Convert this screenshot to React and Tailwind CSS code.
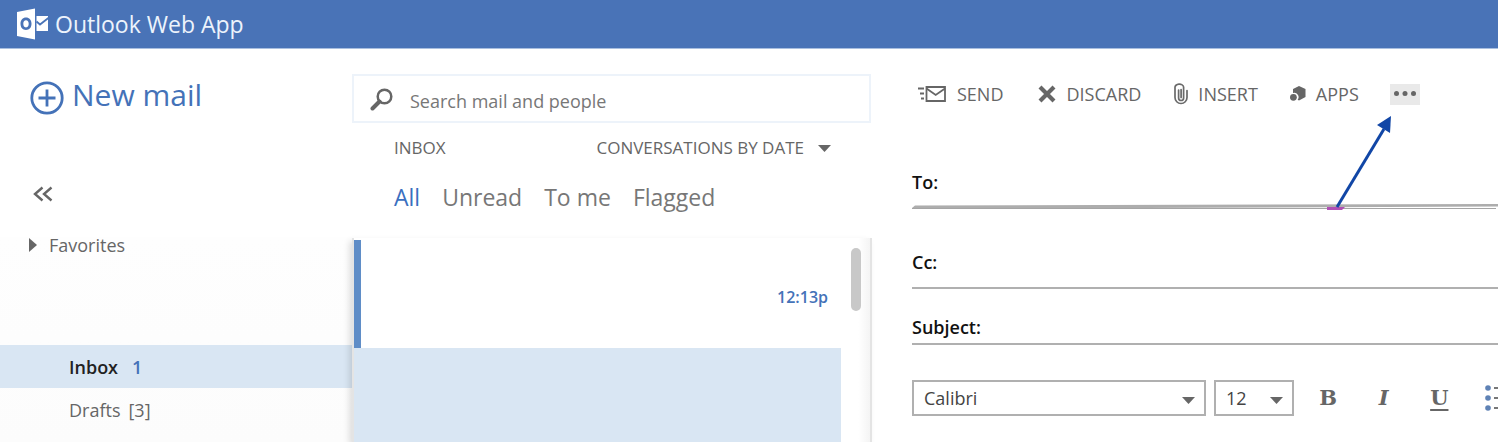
import React, { useState } from 'react';

const folders = [
  { name: 'Inbox', count: '1', selected: true },
  { name: 'Drafts', count: '[3]', selected: false },
];

const filters = ['All', 'Unread', 'To me', 'Flagged'];

const OutlookLogo = () => (
  <svg width="34" height="32" viewBox="0 0 34 32" aria-hidden="true">
    <path fill="#fff" fillRule="evenodd" d="M1 4 19 0.500V31.500L1 28ZM10 9.500C6.700 9.500 4.500 12 4.500 15.800S6.700 22 10 22S15.500 19.600 15.500 15.800S13.300 9.500 10 9.500ZM10 12.200C11.700 12.200 12.700 13.600 12.700 15.800S11.700 19.400 10 19.400S7.300 18 7.300 15.800S8.300 12.200 10 12.200Z" />
    <path fill="#fff" d="M20.500 8H32V23H20.500Z" />
    <path fill="none" stroke="#4973b7" strokeWidth="1.800" d="m20.500 13.500 3.500 3L33 9.500" />
  </svg>
);

const PlusCircle = () => (
  <svg width="34" height="34" viewBox="0 0 34 34" fill="none" stroke="currentColor" strokeWidth="2.800" aria-hidden="true">
    <circle cx="17" cy="17" r="15.200" />
    <path d="M17 8.500V25.500M8.500 17H25.500" />
  </svg>
);

const SearchIcon = () => (
  <svg width="24" height="24" viewBox="0 0 24 24" fill="none" stroke="#666" aria-hidden="true">
    <circle cx="14.500" cy="9.500" r="6.800" strokeWidth="2.500" />
    <path d="M9.500 14.500 2.500 21.500" strokeWidth="4" strokeLinecap="round" />
  </svg>
);

const CaretDown = ({ className }) => (
  <svg width="13" height="7" viewBox="0 0 13 7" fill="#666" className={className} aria-hidden="true">
    <path d="M0 0H13L6.500 7Z" />
  </svg>
);

const SendIcon = () => (
  <svg width="28" height="16" viewBox="0 0 28 16" fill="none" stroke="#666" strokeWidth="1.800" aria-hidden="true">
    <path d="M8.500 1H27V15H8.500Z" />
    <path d="m8.500 2.500 9.200 6.500L27 2.500" />
    <path d="M0 2.500H6M2 7.500H6M3 12.500H6" strokeWidth="2" />
  </svg>
);

const DiscardIcon = () => (
  <svg width="18" height="18" viewBox="0 0 18 18" stroke="#666" strokeWidth="4.200" aria-hidden="true">
    <path d="m2 2 14 14M16 2 2 16" />
  </svg>
);

const ClipIcon = () => (
  <svg width="14" height="22" viewBox="0 0 14 22" fill="none" stroke="#6a6a6a" strokeWidth="1.700" strokeLinecap="round" aria-hidden="true">
    <path d="M9.600 5.500V15A2.500 2.500 0 0 1 4.600 15V7M9.600 5.500V4A4.300 3.100 0 0 0 1 4.500V14.500A6 6 0 0 0 13 14.500V7.500M7.100 6.500V14.500" />
  </svg>
);

const AppsIcon = () => (
  <svg width="16" height="16" viewBox="0 0 16 16" fill="#666" aria-hidden="true">
    <path d="M9 0 15.500 3V11L9 14.500 7.600 13.800A4.300 4.300 0 0 0 3 7V3Z" />
    <circle cx="3.400" cy="11.300" r="3.400" />
  </svg>
);

const BulletsIcon = () => (
  <svg width="13" height="26" viewBox="0 0 13 26" aria-hidden="true">
    <g fill="#5f82b5">
      <circle cx="3" cy="3" r="2.800" />
      <circle cx="3" cy="13" r="2.800" />
      <circle cx="3" cy="23" r="2.800" />
    </g>
    <path d="M9 3H13M9 13H13M9 23H13" stroke="#777" strokeWidth="2" />
  </svg>
);

const Header = () => (
  <header className="flex h-[49px] items-center gap-[5px] border-b border-[#a9bfe0] bg-[#4973b7] px-4">
    <OutlookLogo />
    <h1 className="text-[23px] text-[#edf3fc]">Outlook Web App</h1>
  </header>
);

const Sidebar = () => (
  <aside className="flex flex-col">
    <div className="h-[188px] pt-[26px]">
      <button type="button" className="flex h-10 items-end gap-2 pl-[30px] text-[30px] leading-10 text-[#4472b8]">
        <PlusCircle />
        <span>New mail</span>
      </button>
      <button type="button" aria-label="Collapse folders" className="mt-[71px] ml-[33px] block">
        <svg width="20" height="16" viewBox="0 0 20 16" fill="none" stroke="#666" strokeWidth="2.400">
          <path d="M9.500 1.500 2 8 9.500 14.500M18.500 1.500 11 8 18.500 14.500" />
        </svg>
      </button>
    </div>

    {/* folder tree */}
    <nav className="flex-1 bg-linear-to-b from-[#fefefe] to-[#fcfcfc] text-lg text-[#666]">
      <button type="button" className="flex h-4 items-center gap-3 pl-[29px]">
        <svg width="8" height="14" viewBox="0 0 8 14" fill="#666" aria-hidden="true">
          <path d="M0 0 8 7 0 14Z" />
        </svg>
        <span>Favorites</span>
      </button>
      <ul className="mt-[92px]">
        {folders.map((folder) => (
          <li key={folder.name}>
            <a
              href={`#${folder.name}`}
              className={`flex h-[43px] items-center pl-[69px] ${folder.selected ? 'gap-[14px] bg-[#d9e6f3] font-semibold text-[#222]' : 'gap-2'}`}
            >
              <span>{folder.name}</span>
              <span className={folder.selected ? 'text-[#4472b8]' : ''}>{folder.count}</span>
            </a>
          </li>
        ))}
      </ul>
    </nav>
  </aside>
);

const MessageList = () => {
  const [active, setActive] = useState('All');

  return (
    <section className="flex flex-col">
      <div className="h-[189px] pt-[25px] pr-px text-[#666]">
        <label className="flex h-[49px] items-center gap-4 border-2 border-[#edf3fa] bg-white pl-4">
          <SearchIcon />
          <input
            type="search"
            aria-label="Search mail and people"
            placeholder="Search mail and people"
            className="min-w-0 flex-1 pt-1 text-lg outline-none placeholder:text-[#777]"
          />
        </label>
        <div className="mt-[13px] flex h-6 items-center justify-between pr-10 pl-[42px] text-[17px]">
          <h2>INBOX</h2>
          <button type="button" className="flex items-center gap-[14px]">
            CONVERSATIONS BY DATE
            <CaretDown />
          </button>
        </div>
        <div className="mt-[21px] flex h-8 items-center gap-[22px] pl-[42px] text-[23px] text-[#777]">
          {filters.map((filter) => (
            <button
              key={filter}
              type="button"
              onClick={() => setActive(filter)}
              className={active === filter ? 'text-[#3a6fc0]' : ''}
            >
              {filter}
            </button>
          ))}
        </div>
      </div>

      {/* conversations */}
      <div className="flex flex-1 border-r-2 border-l-2 border-[#e4e4e4] shadow-[-3px_3px_6px_rgba(0,0,0,0.12)]">
        <ul className="flex flex-1 flex-col">
          <li className="mt-[2px] flex h-[108px] items-center justify-end border-l-7 border-[#5f8dc7] pr-[13px]">
            <time className="pt-[6px] text-base font-semibold text-[#4472b8]">12:13p</time>
          </li>
          <li className="flex-1 bg-[#d9e6f3]" />
        </ul>
        <div className="w-[29px] bg-linear-to-r from-white from-60% to-[#f4f4f4] px-[10px] pt-[10px]">
          <div className="h-[63px] w-[10px] rounded-full bg-[#c8c8c8]" />
        </div>
      </div>
    </section>
  );
};

const Toolbar = () => (
  <div className="flex h-7 items-center text-lg text-[#666]">
    <button type="button" className="ml-[6px] flex items-center gap-[11px]">
      <SendIcon />
      SEND
    </button>
    <button type="button" className="ml-[34px] flex items-center gap-[11px]">
      <DiscardIcon />
      DISCARD
    </button>
    <button type="button" className="ml-[33px] flex items-center gap-[10px]">
      <ClipIcon />
      INSERT
    </button>
    <button type="button" className="ml-8 flex items-center gap-[10px]">
      <AppsIcon />
      APPS
    </button>
    <div className="relative ml-[31px]">
      <button type="button" aria-label="More actions" className="flex h-[21px] w-[30px] items-center justify-center bg-[#e9e9e9]">
        <svg width="22" height="6" viewBox="0 0 22 6" fill="#666">
          <circle cx="2.500" cy="2.500" r="2.500" />
          <circle cx="11" cy="2.500" r="2.500" />
          <circle cx="19.500" cy="2.500" r="2.500" />
        </svg>
      </button>
      {/* callout arrow */}
      <svg width="70" height="96" viewBox="0 0 70 96" className="pointer-events-none absolute top-8 right-[26px]" aria-hidden="true">
        <path d="M3 91H21L18 94H3Z" fill="#b04fb5" />
        <path d="M13 91 60 13" stroke="#1146a6" strokeWidth="3" />
        <path d="M67 0 53 9 66 17Z" fill="#1146a6" />
      </svg>
    </div>
  </div>
);

const Field = ({ id, label, className }) => (
  <div className={`flex items-center gap-2 text-lg font-semibold text-[#111] ${className}`}>
    <label htmlFor={id}>{label}</label>
    <input id={id} type="text" className="min-w-0 flex-1 font-normal outline-none" />
  </div>
);

const Picker = ({ label, options, className }) => (
  <div className={`relative h-9 border-2 border-[#b0b0b0] ${className}`}>
    <select aria-label={label} className="h-full w-full appearance-none bg-transparent pl-[10px] text-[#444] outline-none">
      {options.map((option) => (
        <option key={option}>{option}</option>
      ))}
    </select>
    <CaretDown className="pointer-events-none absolute top-[15px] right-[9px]" />
  </div>
);

const Compose = () => (
  <section className="overflow-hidden pt-[31px] pl-10">
    <Toolbar />

    <Field id="to" label="To:" className="mt-[58px] h-8" />
    <svg viewBox="0 0 586 6" preserveAspectRatio="none" className="mt-[6px] h-[6px] w-full" aria-hidden="true">
      <path d="M0 4 3 1.500 586 0V2.500L3 5H0Z" fill="#adadad" />
      <path d="M0 4.500H584" stroke="#a5a5a5" />
    </svg>
    <Field id="cc" label="Cc:" className="mt-9 h-[43px] border-b-2 border-[#b0b0b0] pb-[9px]" />
    <Field id="subject" label="Subject:" className="mt-[22px] h-[34px] border-b-2 border-[#b0b0b0]" />

    {/* formatting bar */}
    <div className="mt-[35px] flex items-center text-lg">
      <Picker label="Font" options={['Calibri', 'Arial', 'Verdana']} className="w-[294px] shrink-0" />
      <Picker label="Font size" options={['12', '14', '16']} className="ml-2 w-20 shrink-0" />
      <div className="flex flex-1 items-center justify-between pl-6 font-['DejaVu_Serif',serif] text-[21px] font-bold text-[#666]">
        <button type="button" aria-label="Bold" className="w-5">B</button>
        <button type="button" aria-label="Italic" className="w-5 italic">I</button>
        <button type="button" aria-label="Underline" className="w-5 underline decoration-2 underline-offset-4">U</button>
        <button type="button" aria-label="Bullets">
          <BulletsIcon />
        </button>
      </div>
    </div>
  </section>
);

export default function App() {
  return (
    <div className="flex min-h-screen flex-col bg-white font-['Open_Sans','Noto_Sans',sans-serif]">
      <Header />
      <main className="grid flex-1 grid-cols-[352fr_520fr_626fr]">
        <Sidebar />
        <MessageList />
        <Compose />
      </main>
    </div>
  );
}
